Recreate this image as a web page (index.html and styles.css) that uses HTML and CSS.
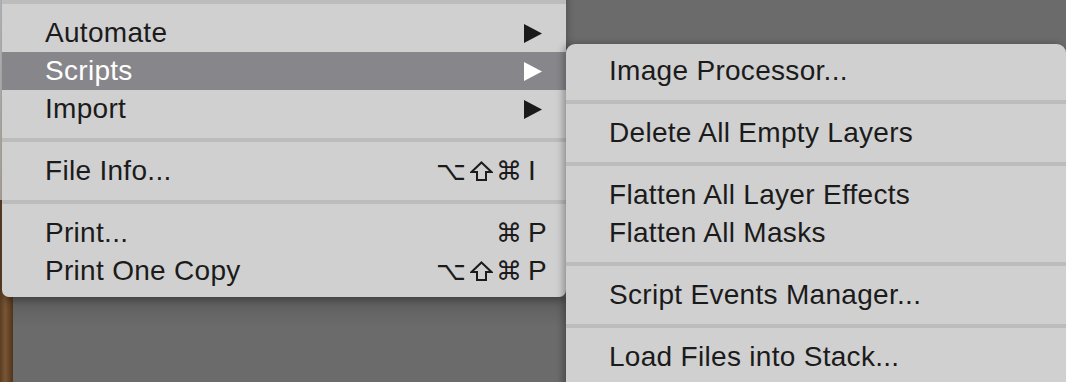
FILE: index.html
```html
<!DOCTYPE html>
<html>
<head>
    <meta charset="utf-8">
    <link rel="stylesheet" href="styles.css">
</head>
<body>

    <!-- main File menu, scrolled so Automate is the first visible item -->
    <div class="menu main">
        <div class="sep"></div>
        <div class="item"><span class="label">Automate</span><svg class="arrow" viewBox="0 0 18 19"><polygon points="0,0 18,9.5 0,19"/></svg></div>
        <div class="item active"><span class="label">Scripts</span><svg class="arrow" viewBox="0 0 18 19"><polygon points="0,0 18,9.5 0,19"/></svg></div>
        <div class="item"><span class="label">Import</span><svg class="arrow" viewBox="0 0 18 19"><polygon points="0,0 18,9.5 0,19"/></svg></div>
        <div class="sep"></div>
        <div class="item"><span class="label">File Info...</span>
            <span class="mods"><span class="opt">⌥</span><svg class="shift" viewBox="0 0 23 20"><polygon points="11.5,1.5 21.5,11 16,11 16,19 7,19 7,11 1.5,11"/></svg><span class="cmd">⌘</span></span><span class="key">I</span></div>
        <div class="sep"></div>
        <div class="item"><span class="label">Print...</span>
            <span class="mods"><span class="cmd">⌘</span></span><span class="key">P</span></div>
        <div class="item"><span class="label">Print One Copy</span>
            <span class="mods"><span class="opt">⌥</span><svg class="shift" viewBox="0 0 23 20"><polygon points="11.5,1.5 21.5,11 16,11 16,19 7,19 7,11 1.5,11"/></svg><span class="cmd">⌘</span></span><span class="key">P</span></div>
    </div>

    <!-- Scripts submenu -->
    <div class="menu sub">
        <div class="item"><span class="label">Image Processor...</span></div>
        <div class="sep"></div>
        <div class="item"><span class="label">Delete All Empty Layers</span></div>
        <div class="sep"></div>
        <div class="item"><span class="label">Flatten All Layer Effects</span></div>
        <div class="item"><span class="label">Flatten All Masks</span></div>
        <div class="sep"></div>
        <div class="item"><span class="label">Script Events Manager...</span></div>
        <div class="sep"></div>
        <div class="item"><span class="label">Load Files into Stack...</span></div>
        <div class="item"><span class="label">Load Multiple DICOM Files...</span></div>
    </div>

</body>
</html>
```

FILE: styles.css
```css
html, body{
    margin:0px;
    height:100%;
    overflow:hidden;
}
body{
    position:relative;
    font-family: "Liberation Sans", Arial, sans-serif;
    font-size:28px;
    letter-spacing:0.3px;
    color:#1b1b1b;
    background:
        linear-gradient(#c6cacd, #b9b3aa) no-repeat 0 0 / 2px 200px,
        linear-gradient(90deg, #5a3d22, #7a5534 40%, #4e341d) no-repeat 0 0 / 13px 100%,
        linear-gradient(#5e5e5e, #6b6b6b 30px) no-repeat 0 297px / 100% 100%,
        #6b6b6b;
}
.menu{
    position:absolute;
    background:#d0d0d0;
}
.main{
    left:2px;
    top:-10px;
    width:564px;
    padding-bottom:7px;
    border-radius:0 0 7px 7px;
    box-shadow:0 3px 8px rgba(0, 0, 0, 0.35);
}
.sub{
    left:566px;
    top:44px;
    width:500px;
    height:400px;
    padding-top:8px;
    border-radius:9px 9px 0 0;
    box-shadow:-3px 0 7px rgba(0, 0, 0, 0.3);
}
.sep{
    height:24px;
    background:linear-gradient(#bcbcbc, #bcbcbc) no-repeat 0 10px / 100% 4px;
}
.item{
    display:flex;
    align-items:center;
    height:38px;
    line-height:38px;
    padding-left:43px;
    padding-right:20px;
    white-space:nowrap;
}
.label{
    flex:1;
}
.active{
    background:#87868b;
    color:#ffffff;
}
.arrow{
    width:18px;
    height:19px;
    margin-right:4px;
    fill:#1a1a1a;
}
.active .arrow{
    fill:#ffffff;
}
.mods{
    display:flex;
    align-items:center;
    font-family: "DejaVu Sans", sans-serif;
    letter-spacing:0;
    margin-right:6px;
}
.opt{
    font-size:26px;
}
.shift{
    width:23px;
    height:20px;
    margin:0 3px 0 4px;
    fill:none;
    stroke:#1b1b1b;
    stroke-width:2;
    stroke-linejoin:miter;
}
.cmd{
    font-size:26px;
}
.key{
    width:18px;
}
```
